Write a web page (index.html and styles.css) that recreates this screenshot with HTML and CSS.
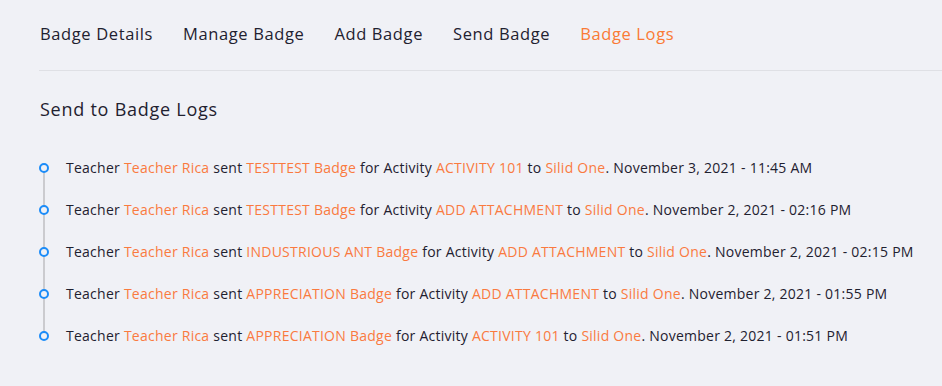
FILE: index.html
```html
<!DOCTYPE html>
<html>
<head>
<meta charset="utf-8">
<link rel="stylesheet" href="styles.css">
</head>
<body>
<div class="page">
  <nav class="tabs">
    <span class="tab">Badge Details</span>
    <span class="tab">Manage Badge</span>
    <span class="tab">Add Badge</span>
    <span class="tab">Send Badge</span>
    <span class="tab active">Badge Logs</span>
  </nav>
  <h2 class="title">Send to Badge Logs</h2>
  <ul class="timeline">
    <li class="item"><span class="dot"></span><span class="text">Teacher <span class="hl">Teacher Rica</span> sent <span class="hl">TESTTEST Badge</span> for Activity <span class="hl">ACTIVITY 101</span> to <span class="hl">Silid One</span>. November 3, 2021 - 11:45 AM</span></li>
    <li class="item"><span class="dot"></span><span class="text">Teacher <span class="hl">Teacher Rica</span> sent <span class="hl">TESTTEST Badge</span> for Activity <span class="hl">ADD ATTACHMENT</span> to <span class="hl">Silid One</span>. November 2, 2021 - 02:16 PM</span></li>
    <li class="item"><span class="dot"></span><span class="text">Teacher <span class="hl">Teacher Rica</span> sent <span class="hl">INDUSTRIOUS ANT Badge</span> for Activity <span class="hl">ADD ATTACHMENT</span> to <span class="hl">Silid One</span>. November 2, 2021 - 02:15 PM</span></li>
    <li class="item"><span class="dot"></span><span class="text">Teacher <span class="hl">Teacher Rica</span> sent <span class="hl">APPRECIATION Badge</span> for Activity <span class="hl">ADD ATTACHMENT</span> to <span class="hl">Silid One</span>. November 2, 2021 - 01:55 PM</span></li>
    <li class="item"><span class="dot"></span><span class="text">Teacher <span class="hl">Teacher Rica</span> sent <span class="hl">APPRECIATION Badge</span> for Activity <span class="hl">ACTIVITY 101</span> to <span class="hl">Silid One</span>. November 2, 2021 - 01:51 PM</span></li>
  </ul>
</div>
</body>
</html>
```
FILE: styles.css
```css
html, body {
  margin: 0;
  padding: 0;
  background: #f0f1f6;
}
body {
  font-family: "Open Sans", "DejaVu Sans", sans-serif;
  color: #1f2130;
}
.page {
  padding-left: 39px;
}
.tabs {
  display: flex;
  gap: 30px;
  align-items: center;
  padding-left: 1px;
  padding-bottom: 2px;
  box-sizing: border-box;
  border-bottom: 1px solid #dfe0e5;
  height: 71px;
}
.tab {
  font-size: 16.5px;
  line-height: 24px;
  color: #1f2130;
  letter-spacing: 0.62px;
}
.tab.active {
  color: #fa7a35;
}
.title {
  margin: 26px 0 0 1px;
  font-size: 18px;
  font-weight: 500;
  line-height: 24px;
  color: #1f2130;
  letter-spacing: 0.75px;
}
.timeline {
  list-style: none;
  margin: 35px 0 0 0;
  padding: 0;
  display: flex;
  flex-direction: column;
  gap: 18px;
}
.item {
  display: flex;
  align-items: center;
  gap: 17px;
  height: 24px;
  position: relative;
}
.item:not(:last-child)::after {
  content: "";
  position: absolute;
  left: 4px;
  top: 12px;
  width: 2px;
  height: 42px;
  background: #cbcbcf;
}
.dot {
  width: 10px;
  height: 10px;
  box-sizing: border-box;
  border: 2px solid #1c8cf8;
  border-radius: 50%;
  background: #f0f1f6;
  position: relative;
  z-index: 1;
  flex: none;
}
.text {
  font-size: 14px;
  line-height: 24px;
  color: #1f2130;
  letter-spacing: 0.25px;
  white-space: nowrap;
}
.hl {
  color: #fa7a3f;
}
```
